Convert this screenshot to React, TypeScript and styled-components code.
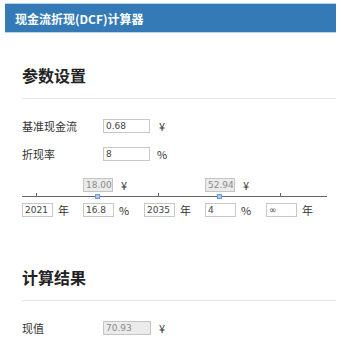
import React from 'react';
import styled, { createGlobalStyle } from 'styled-components';

const Global = createGlobalStyle`
  html, body { margin: 0; padding: 0; background: #fff; }
  body { font-family: "Noto Sans CJK SC", "DejaVu Sans", sans-serif; color: #333; }
`;

const Page = styled.div`
  padding: 3px 5px 0;
`;

const Header = styled.div`
  height: 28px;
  border-top: 1px solid #b9d5ee;
  border-bottom: 1px solid #b9d5ee;
  background: #337ab7;
  color: #fff;
  font-size: 12px;
  font-weight: bold;
  display: flex;
  align-items: center;
  padding-left: 10px;
`;

const Body = styled.div`
  padding-left: 17px;
`;

const SectionTitle = styled.h2<{ $top: number }>`
  margin: ${(p) => p.$top}px 0 0;
  font-size: 16px;
  line-height: 20px;
  font-weight: bold;
  color: #222;
`;

const Rule = styled.div`
  height: 1px;
  background: #e6e6e6;
  margin-top: 13px;
`;

const Row = styled.div<{ $top: number }>`
  display: flex;
  align-items: center;
  height: 14px;
  margin-top: ${(p) => p.$top}px;
`;

const Label = styled.span`
  width: 81px;
  font-size: 11px;
  line-height: 14px;
  color: #333;
`;

const Field = styled.div<{ $w: number; $ro?: boolean }>`
  box-sizing: border-box;
  width: ${(p) => p.$w}px;
  height: 14px;
  border: 1px solid ${(p) => (p.$ro ? '#c4c4c4' : '#c8c8c8')};
  background: ${(p) => (p.$ro ? '#ebebeb' : '#fff')};
  color: ${(p) => (p.$ro ? '#8a8a8a' : '#444')};
  font-family: "DejaVu Sans", "Liberation Sans", sans-serif;
  font-size: 9px;
  line-height: 12px;
  padding-left: 2px;
  white-space: nowrap;
  overflow: hidden;
`;

const Unit = styled.span<{ $gap: number }>`
  margin-left: ${(p) => p.$gap}px;
  font-size: 11px;
  line-height: 14px;
  color: #333;
`;

const Timeline = styled.div`
  margin-top: 17px;
  width: 305px;
`;

const Cols = styled.div<{ $top?: number; $h: number }>`
  display: flex;
  height: ${(p) => p.$h}px;
  margin-top: ${(p) => p.$top ?? 0}px;
`;

const Cell = styled.div`
  width: 61px;
  display: flex;
  align-items: center;
`;

const Axis = styled.div`
  display: flex;
  margin-top: 2px;
`;

const Segment = styled.div`
  position: relative;
  width: 61px;
  height: 3px;
  border-bottom: 1px solid #666;
`;

const Tick = styled.div`
  position: absolute;
  left: 14px;
  bottom: 0;
  width: 1px;
  height: 3px;
  background: #666;
`;

const Marker = styled.div`
  position: absolute;
  left: 12px;
  bottom: -3px;
  width: 5px;
  height: 5px;
  box-sizing: border-box;
  border: 1px solid #6a9fd8;
  background: #a9c8ec;
`;

export default function App() {
  const top = [null, { v: '18.00' }, null, { v: '52.94' }, null];
  const bottom = [
    { v: '2021', u: '年' },
    { v: '16.8', u: '%' },
    { v: '2035', u: '年' },
    { v: '4', u: '%' },
    { v: '∞', u: '年' },
  ];
  return (
    <Page>
      <Global />
      <Header>现金流折现(DCF)计算器</Header>
      <Body>
        <SectionTitle $top={32}>参数设置</SectionTitle>
        <Rule />
        <Row $top={20}>
          <Label>基准现金流</Label>
          <Field $w={47}>0.68</Field>
          <Unit $gap={9}>¥</Unit>
        </Row>
        <Row $top={14}>
          <Label>折现率</Label>
          <Field $w={47}>8</Field>
          <Unit $gap={7}>%</Unit>
        </Row>
        <Timeline>
          <Cols $h={13}>
            {top.map((t, i) => (
              <Cell key={i}>
                {t && (
                  <>
                    <Field $w={30} $ro>
                      {t.v}
                    </Field>
                    <Unit $gap={8}>¥</Unit>
                  </>
                )}
              </Cell>
            ))}
          </Cols>
          <Axis>
            {top.map((t, i) => (
              <Segment key={i}>{t ? <Marker /> : <Tick />}</Segment>
            ))}
          </Axis>
          <Cols $h={14} $top={6}>
            {bottom.map((b, i) => (
              <Cell key={i}>
                <Field $w={31}>{b.v}</Field>
                <Unit $gap={5}>{b.u}</Unit>
              </Cell>
            ))}
          </Cols>
        </Timeline>
        <SectionTitle $top={50}>计算结果</SectionTitle>
        <Rule />
        <Row $top={20}>
          <Label>现值</Label>
          <Field $w={48} $ro>
            70.93
          </Field>
          <Unit $gap={8}>¥</Unit>
        </Row>
      </Body>
    </Page>
  );
}
